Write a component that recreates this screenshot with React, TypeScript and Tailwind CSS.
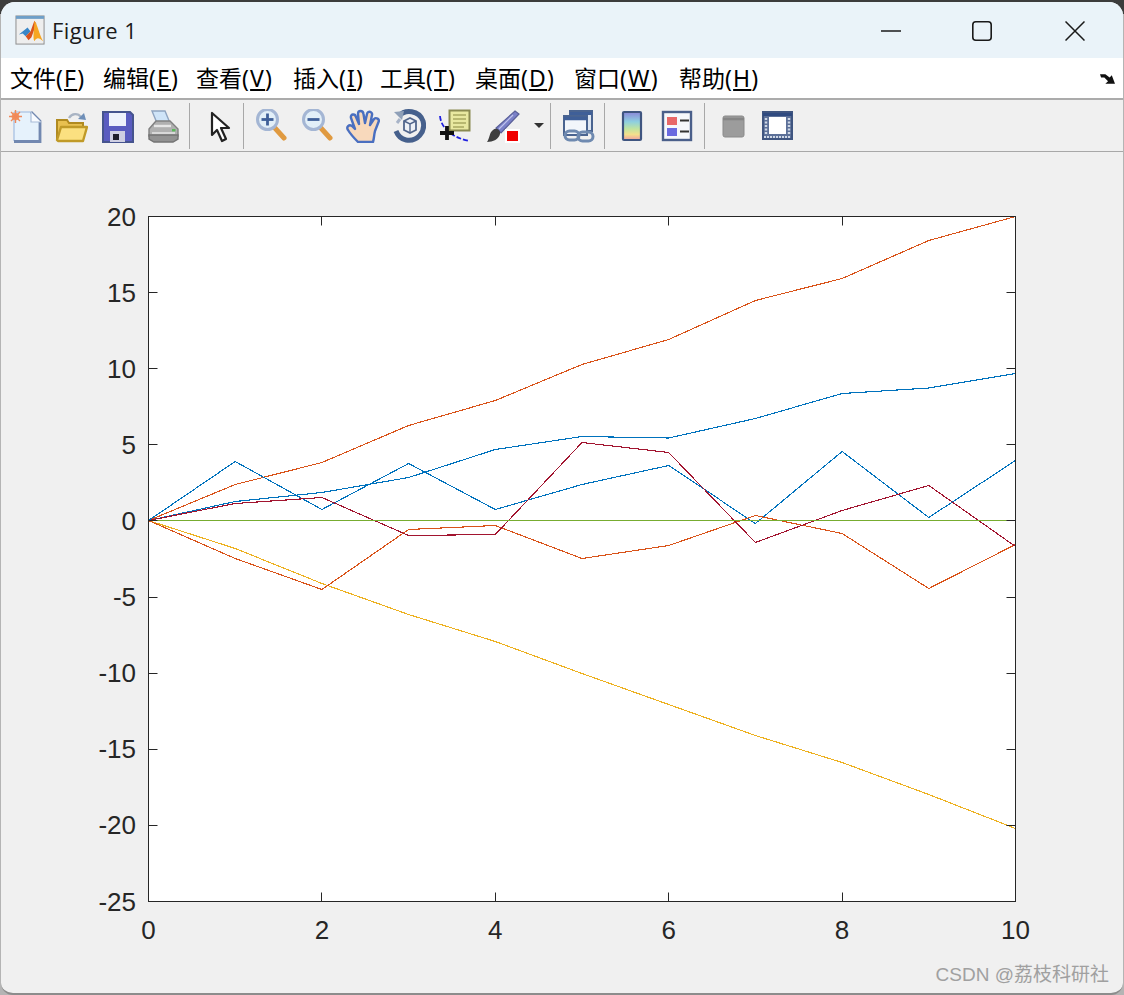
import type { ReactNode } from 'react'

const menus = [
  { cn: '文件', key: 'F', w: 'w-[76px]' },
  { cn: '编辑', key: 'E', w: 'w-[76px]' },
  { cn: '查看', key: 'V', w: 'w-[80px]' },
  { cn: '插入', key: 'I', w: 'w-[70px]' },
  { cn: '工具', key: 'T', w: 'w-[78px]' },
  { cn: '桌面', key: 'D', w: 'w-[82px]' },
  { cn: '窗口', key: 'W', w: 'w-[88px]' },
  { cn: '帮助', key: 'H', w: '' },
]

const X_TICKS = [0, 2, 4, 6, 8, 10]
const Y_TICKS = [20, 15, 10, 5, 0, -5, -10, -15, -20, -25]
const LEFT = 148.5
const RIGHT = 1015.5
const TOP = 64.5
const BOTTOM = 749.5
const OFFSET = 152
const sx = (v: number) => LEFT + (v / 10) * (RIGHT - LEFT)
const sy = (v: number) => TOP + ((20 - v) / 45) * (BOTTOM - TOP)

// y values in window pixels, one per x = 0..10
const series = [
  { color: '#0072bd', ys: [520, 501, 492, 477, 449, 436, 437.5, 418, 393, 387.5, 373] },
  { color: '#d95319', ys: [520, 484, 462, 425, 400, 364, 339, 300, 278, 240, 216] },
  { color: '#edb120', ys: [520, 548, 583, 614, 641, 673, 704, 735, 762, 794, 828] },
  { color: '#0072bd', ys: [520, 461, 509, 463, 509, 484, 465, 523, 451, 517, 460] },
  { color: '#d95319', ys: [520, 558, 589, 529, 525, 558, 545, 515, 533, 588, 544] },
  { color: '#a2142f', ys: [520, 503, 497, 535, 534, 442, 452, 542, 510, 485, 546] },
  { color: '#77ac30', ys: [520, 520, 520, 520, 520, 520, 520, 520, 520, 520, 520] },
]

function Icon({ children, className = '' }: { children: ReactNode; className?: string }) {
  return (
    <svg viewBox="0 0 34 34" className={`w-[34px] h-[34px] shrink-0 blur-[0.5px] ${className}`}>
      {children}
    </svg>
  )
}

function Sep({ className = '' }: { className?: string }) {
  return <div className={`w-px h-[46px] bg-[#a8a8a8] shrink-0 ${className}`} />
}

function NewIcon() {
  return (
    <Icon>
      <path d="M6 3H23L33 13V33H6Z" fill="#e6f2fc" />
      <path d="M6 3H23M6 3V32" fill="none" stroke="#b4cae6" strokeWidth="1.6" />
      <path d="M23 3L32 12V32.500H6" fill="none" stroke="#7288b0" strokeWidth="2.800" />
      <path d="M23 3V13H33" fill="#f8fbff" stroke="#a8bcd8" strokeWidth="1.200" />
      <circle cx="7.500" cy="7.500" r="3.800" fill="#f49a60" />
      <path d="M7.500 1V14M1 7.500H14M3 3L12 12M12 3L3 12" stroke="#f0885a" strokeWidth="1.400" />
    </Icon>
  )
}

function OpenIcon() {
  return (
    <Icon>
      <path d="M3 30V11H13L15 14H29V20Z" fill="#e8c050" stroke="#b08a20" strokeWidth="2" />
      <path d="M3 31L7 18H33L29 32H4Z" fill="#fbe080" stroke="#c09a28" strokeWidth="2.400" strokeLinejoin="round" />
      <path d="M15 9C18 4 24 4 27 8" fill="none" stroke="#a9b4c4" strokeWidth="2.400" />
      <path d="M24 10L32 11L30 4Z" fill="#6f8fb8" />
    </Icon>
  )
}

function SaveIcon() {
  return (
    <Icon>
      <path d="M3 3H30L33 6V33H3Z" fill="#5a5cc0" stroke="#46548e" strokeWidth="2" />
      <rect x="9" y="4" width="17" height="13" fill="#eef1fb" />
      <rect x="10" y="22" width="15" height="11" fill="#cfcfe2" />
      <rect x="13" y="25" width="6" height="6" fill="#1e1e2a" />
    </Icon>
  )
}

function PrintIcon() {
  return (
    <Icon>
      <path d="M6 2H19L24 14H11Z" fill="#cfe4f8" stroke="#8fa4c0" strokeWidth="1.400" />
      <path d="M3 20L10 12H24L32 20V27H3Z" fill="#b0b0b0" stroke="#808080" strokeWidth="1.400" />
      <path d="M3 26H32V30L27 33H8L3 30Z" fill="#929292" stroke="#747474" strokeWidth="1.400" />
      <path d="M8 17H25" stroke="#e6e6e6" strokeWidth="2.400" />
      <path d="M6 24H29" stroke="#e2e2e2" strokeWidth="1.600" />
      <rect x="26" y="20" width="3.500" height="2.400" fill="#5cb85c" />
    </Icon>
  )
}

function PointerIcon() {
  return (
    <Icon>
      <path d="M9 4V26L14 21L19 32L23 30L18 19H26Z" fill="#fff" stroke="#222" strokeWidth="2.200" strokeLinejoin="round" />
    </Icon>
  )
}

function LensIcon({ plus }: { plus?: boolean }) {
  return (
    <Icon>
      <path d="M20 18L30 29" stroke="#e09a40" strokeWidth="5" strokeLinecap="round" />
      <circle cx="13.500" cy="10.500" r="10" fill="#e2eff8" stroke="#a4b6d4" strokeWidth="3" />
      <path d="M7.500 10.500H19.500" stroke="#3f5f98" strokeWidth="2.800" />
      {plus && <path d="M13.500 4.500V16.500" stroke="#3f5f98" strokeWidth="2.800" />}
    </Icon>
  )
}

function HandIcon() {
  return (
    <Icon>
      <path
        d="M12 33C9 30 5 26 2 21C0 18 3 15 6 17L9 20L5 9C4 5 9 4 10 8L13 15L12 5C12 1 17 1 17.500 5L19 14L21 5C22 1 27 3 26 6L24 16L28 10C30 8 34 10 32.500 13L29 22C28 26 28 30 27 33Z"
        fill="#f8d9bc"
        stroke="#4a6fc0"
        strokeWidth="2.400"
        strokeLinejoin="round"
      />
    </Icon>
  )
}

function RotateIcon() {
  return (
    <Icon>
      <path d="M7 7C13 0 27 1 31 12C34 23 25 33 14 31C9 30 6 27 4 22" fill="none" stroke="#46608c" strokeWidth="5" />
      <path d="M2 3L12 2L10 11Z" fill="#8fa0b8" />
      <path d="M5 14L8 10" stroke="#a8b4c8" strokeWidth="3" />
      <path d="M12 12L18 9L24 12V21L18 24L12 21Z" fill="#eef1f6" stroke="#52668c" strokeWidth="1.800" />
      <path d="M12 12L18 15L24 12M18 15V24" fill="none" stroke="#52668c" strokeWidth="1.400" />
    </Icon>
  )
}

function CursorIcon() {
  return (
    <Icon>
      <path d="M2 7C3 19 14 29 32 32" fill="none" stroke="#2020e0" strokeWidth="1.800" strokeDasharray="5 2" />
      <rect x="11.500" y="1.500" width="20" height="20" fill="#e8e8a0" stroke="#8a8a50" strokeWidth="2" />
      <path d="M15 6H28M15 10H28M15 14H28M15 18H26" stroke="#a8a860" strokeWidth="1.500" />
      <path d="M9 17V31M2 24H16" stroke="#111" strokeWidth="3.800" />
    </Icon>
  )
}

function BrushIcon() {
  return (
    <Icon>
      <path d="M29 2L33 5L15 24L10 19Z" fill="#7a80c8" stroke="#5a6098" strokeWidth="1.200" />
      <path d="M27 6L13 20" stroke="#c0c4ec" strokeWidth="1.200" />
      <path d="M1 33C4 29 3 24 7 21C10 18 15 21 14 25C13 30 7 33 1 33Z" fill="#3e3e3e" />
      <rect x="19" y="20" width="15" height="14" fill="#fff" />
      <rect x="21" y="22" width="11" height="10" fill="#f00000" />
    </Icon>
  )
}

function LinkIcon() {
  return (
    <Icon>
      <rect x="9" y="2" width="22" height="20" fill="#dde6f2" stroke="#4a6490" strokeWidth="2" />
      <path d="M9 4.500H31" stroke="#3f5f98" strokeWidth="3" />
      <rect x="3" y="7" width="23" height="19" fill="#f2f6fb" stroke="#4a6490" strokeWidth="2" />
      <path d="M3 9.500H26" stroke="#3f5f98" strokeWidth="3.500" />
      <rect x="4" y="22" width="14" height="9" rx="4.500" fill="none" stroke="#6f8ab0" strokeWidth="3" />
      <rect x="17" y="23" width="15" height="9" rx="4.500" fill="none" stroke="#6f8ab0" strokeWidth="3" />
    </Icon>
  )
}

function ColorbarIcon() {
  return (
    <Icon>
      <defs>
        <linearGradient id="cbar" x1="0" y1="0" x2="0" y2="1">
          <stop offset="0" stopColor="#8a86d8" />
          <stop offset="0.35" stopColor="#8ed0e0" />
          <stop offset="0.6" stopColor="#c0e4a0" />
          <stop offset="0.8" stopColor="#f4e08c" />
          <stop offset="1" stopColor="#f0a0a0" />
        </linearGradient>
      </defs>
      <rect x="8" y="3" width="18" height="28" rx="1" fill="url(#cbar)" stroke="#3f5580" strokeWidth="2.200" />
    </Icon>
  )
}

function LegendIcon() {
  return (
    <Icon>
      <rect x="3" y="3" width="28" height="28" fill="#f6f8fb" stroke="#4a5f8a" strokeWidth="2.400" />
      <rect x="7" y="8" width="10" height="8" fill="#e86868" />
      <rect x="7" y="19" width="10" height="8" fill="#6a6ae0" />
      <path d="M20 11.500H29M20 22.500H29" stroke="#333" strokeWidth="2.200" />
    </Icon>
  )
}

function HideIcon() {
  return (
    <Icon>
      <rect x="6" y="7" width="21" height="21" rx="2" fill="#9c9c9c" stroke="#8a8a8a" strokeWidth="1" />
      <path d="M6 10H27" stroke="#858585" strokeWidth="2.600" />
    </Icon>
  )
}

function ShowIcon() {
  return (
    <Icon>
      <rect x="3" y="3" width="29" height="27" fill="#5c7098" stroke="#3f5580" strokeWidth="2" />
      <path d="M3 5.500H32" stroke="#2f4a80" strokeWidth="3" />
      <rect x="9" y="8" width="17" height="17" fill="#fff" />
      <path d="M6 9V25M29 9V25" stroke="#cfd8e6" strokeWidth="2.400" strokeDasharray="2 1.500" />
      <path d="M4 28H31" stroke="#cfd8e6" strokeWidth="2" strokeDasharray="2 1" />
    </Icon>
  )
}

function MatlabLogo() {
  return (
    <svg viewBox="0 0 32 32" className="w-[31px] h-[31px] shrink-0">
      <rect x="1" y="1" width="29" height="29" fill="#eeeeee" stroke="#8c8c8c" strokeWidth="1" />
      <rect x="1" y="1" width="29" height="3" fill="#6f9fc8" />
      <path d="M4 20L13 13L16 17L11 22L8 19Z" fill="#3a87c8" />
      <path d="M11 22L16 17L20 6L22 9L17 23L14 26Z" fill="#d9531e" />
      <path d="M20 6C23 9 25 20 29 27C25 24 23 22 20 27C18 24 20 14 20 6Z" fill="#f6a623" />
    </svg>
  )
}

function Plot() {
  return (
    <svg viewBox="0 0 1124 842" className="block w-[1124px] h-[842px]">
      <rect x={LEFT} y={TOP} width={RIGHT - LEFT} height={BOTTOM - TOP} fill="#ffffff" />
      <g shapeRendering="crispEdges">
        {series.map((s, i) => (
          <polyline
            key={i}
            fill="none"
            stroke={s.color}
            strokeWidth="1.100"
            points={s.ys.map((y, x) => `${sx(x)},${y - OFFSET + 0.5}`).join(' ')}
          />
        ))}
      </g>
      <rect x={LEFT} y={TOP} width={RIGHT - LEFT} height={BOTTOM - TOP} fill="none" stroke="#262626" strokeWidth="1" />
      <g stroke="#262626" strokeWidth="1">
        {X_TICKS.map((t) => (
          <g key={t}>
            <line x1={Math.floor(sx(t)) + 0.5} x2={Math.floor(sx(t)) + 0.5} y1={BOTTOM} y2={BOTTOM - 9} />
            <line x1={Math.floor(sx(t)) + 0.5} x2={Math.floor(sx(t)) + 0.5} y1={TOP} y2={TOP + 9} />
          </g>
        ))}
        {Y_TICKS.map((t) => (
          <g key={t}>
            <line x1={LEFT} x2={LEFT + 9} y1={Math.floor(sy(t)) + 0.5} y2={Math.floor(sy(t)) + 0.5} />
            <line x1={RIGHT} x2={RIGHT - 9} y1={Math.floor(sy(t)) + 0.5} y2={Math.floor(sy(t)) + 0.5} />
          </g>
        ))}
      </g>
      <g fill="#262626" fontSize="26" fontFamily="'Liberation Sans', Arial, sans-serif">
        {X_TICKS.map((t) => (
          <text key={t} x={sx(t)} y={787} textAnchor="middle">
            {t}
          </text>
        ))}
        {Y_TICKS.map((t) => (
          <text key={t} x={136} y={sy(t) + 9} textAnchor="end">
            {t}
          </text>
        ))}
      </g>
    </svg>
  )
}

export default function App() {
  return (
    <div className="w-[1124px] h-[995px] bg-gradient-to-b from-[#3c3c3c] from-[14px] to-[#b4b4b4] to-[14px] overflow-hidden pt-[2px]">
      <div className="h-[993px] mx-px bg-[#f0f0f0] rounded-t-[14px] rounded-b-[12px] overflow-hidden border-b-2 border-[#8c8c8c] flex flex-col">
        {/* title bar */}
        <div className="h-[56px] bg-[#eaf3f9] flex items-center shrink-0 pl-[14px] pt-[1px]">
          <MatlabLogo />
          <span
            className="ml-[6px] text-[22px] tracking-[0.4px] text-[#1a1a1a]"
            style={{ fontFamily: "'Open Sans', sans-serif" }}
          >
            Figure 1
          </span>
          <div className="ml-auto flex items-center pr-[38px]">
            <svg viewBox="0 0 20 20" className="w-[20px] h-[20px]">
              <path d="M0 10H20" stroke="#1a1a1a" strokeWidth="1.600" />
            </svg>
            <svg viewBox="0 0 20 20" className="w-[20px] h-[20px] ml-[71px]">
              <rect x="0.800" y="0.800" width="18.400" height="18.400" rx="3" fill="none" stroke="#1a1a1a" strokeWidth="1.600" />
            </svg>
            <svg viewBox="0 0 20 20" className="w-[20px] h-[20px] ml-[73px]">
              <path d="M0.500 0.500L19.500 19.500M19.500 0.500L0.500 19.500" stroke="#1a1a1a" strokeWidth="1.500" />
            </svg>
          </div>
        </div>

        {/* menu bar */}
        <div
          className="h-[42px] bg-white border-b-2 border-[#ababab] flex items-center gap-[17px] shrink-0 pl-[9px] text-[23px] text-black"
          style={{ fontFamily: "'Noto Sans', 'Noto Sans CJK SC', sans-serif" }}
        >
          {menus.map((m) => (
            <span key={m.key} className={`whitespace-nowrap ${m.w}`}>
              {m.cn}
              <span className="tracking-[1.2px]">
                (<span className="underline underline-offset-2">{m.key}</span>)
              </span>
            </span>
          ))}
          <svg viewBox="0 0 14 10" className="w-[15px] h-[11px] ml-auto mr-[8px]">
            <path d="M0 1H5L9 4L11 2L14 10H5L7.500 7.500L4 4H1Z" fill="#111" />
          </svg>
        </div>

        {/* toolbar */}
        <div className="h-[52px] bg-[#f0f0f0] border-b border-[#a8a8a8] flex items-center shrink-0 pl-[7px]">
          <div className="flex gap-3">
            <NewIcon />
            <OpenIcon />
            <SaveIcon />
            <PrintIcon />
          </div>
          <Sep className="ml-[9px]" />
          <div className="ml-[13px]">
            <PointerIcon />
          </div>
          <Sep className="ml-[6px]" />
          <div className="flex gap-3 ml-[10px]">
            <LensIcon plus />
            <LensIcon />
            <HandIcon />
            <RotateIcon />
            <CursorIcon />
          </div>
          <div className="ml-[14px]">
            <BrushIcon />
          </div>
          <div className="ml-[14px] w-0 h-0 border-x-[5px] border-x-transparent border-t-[5px] border-t-[#333]" />
          <Sep className="ml-[6px]" />
          <div className="ml-[10px]">
            <LinkIcon />
          </div>
          <Sep className="ml-[9px]" />
          <div className="flex gap-[11px] ml-[10px]">
            <ColorbarIcon />
            <LegendIcon />
          </div>
          <Sep className="ml-[10px]" />
          <div className="flex gap-[9px] ml-[12px]">
            <HideIcon />
            <ShowIcon />
          </div>
        </div>

        {/* axes */}
        <div className="relative flex-1 -ml-px">
          <Plot />
          <span
            className="absolute right-[14px] bottom-[5px] text-[19px] text-[#a0a0a0] whitespace-nowrap"
            style={{ fontFamily: "'Liberation Sans', 'Noto Sans CJK SC', sans-serif" }}
          >
            CSDN @荔枝科研社
          </span>
        </div>
      </div>
    </div>
  )
}
